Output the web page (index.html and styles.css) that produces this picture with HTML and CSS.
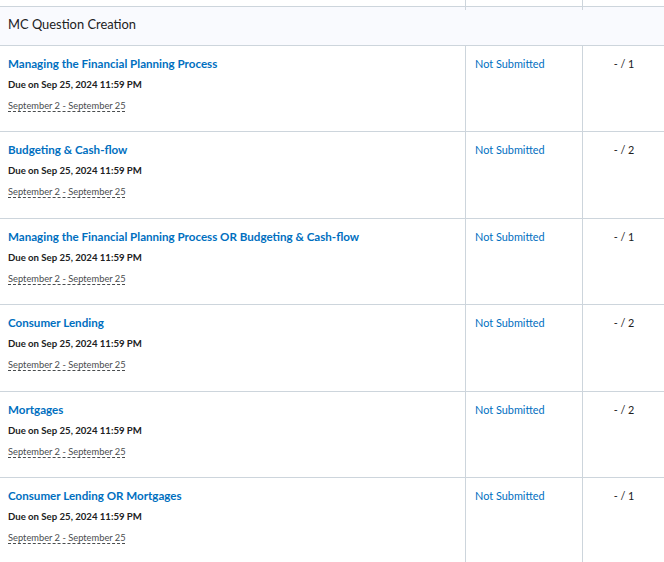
FILE: index.html
```html
<!DOCTYPE html>
<html>
<head>
<meta charset="utf-8">
<link rel="stylesheet" href="styles.css">
</head>
<body>
<div class="table">
  <div class="toprow">
    <div class="c1"></div><div class="c2"></div><div class="c3"></div>
  </div>
  <div class="group">MC Question Creation</div>

  <div class="row">
    <div class="c1">
      <a class="title">Managing the Financial Planning Process</a>
      <div class="due">Due on Sep 25, 2024 11:59 PM</div>
      <div class="dates"><span>September 2 - September 25</span></div>
    </div>
    <div class="c2"><a class="status">Not Submitted</a></div>
    <div class="c3"><span class="score">- / 1</span></div>
  </div>

  <div class="row">
    <div class="c1">
      <a class="title">Budgeting &amp; Cash-flow</a>
      <div class="due">Due on Sep 25, 2024 11:59 PM</div>
      <div class="dates"><span>September 2 - September 25</span></div>
    </div>
    <div class="c2"><a class="status">Not Submitted</a></div>
    <div class="c3"><span class="score">- / 2</span></div>
  </div>

  <div class="row">
    <div class="c1">
      <a class="title">Managing the Financial Planning Process OR Budgeting &amp; Cash-flow</a>
      <div class="due">Due on Sep 25, 2024 11:59 PM</div>
      <div class="dates"><span>September 2 - September 25</span></div>
    </div>
    <div class="c2"><a class="status">Not Submitted</a></div>
    <div class="c3"><span class="score">- / 1</span></div>
  </div>

  <div class="row">
    <div class="c1">
      <a class="title">Consumer Lending</a>
      <div class="due">Due on Sep 25, 2024 11:59 PM</div>
      <div class="dates"><span>September 2 - September 25</span></div>
    </div>
    <div class="c2"><a class="status">Not Submitted</a></div>
    <div class="c3"><span class="score">- / 2</span></div>
  </div>

  <div class="row">
    <div class="c1">
      <a class="title">Mortgages</a>
      <div class="due">Due on Sep 25, 2024 11:59 PM</div>
      <div class="dates"><span>September 2 - September 25</span></div>
    </div>
    <div class="c2"><a class="status">Not Submitted</a></div>
    <div class="c3"><span class="score">- / 2</span></div>
  </div>

  <div class="row">
    <div class="c1">
      <a class="title">Consumer Lending OR Mortgages</a>
      <div class="due">Due on Sep 25, 2024 11:59 PM</div>
      <div class="dates"><span>September 2 - September 25</span></div>
    </div>
    <div class="c2"><a class="status">Not Submitted</a></div>
    <div class="c3"><span class="score">- / 1</span></div>
  </div>
</div>
</body>
</html>
```

FILE: styles.css
```css
html, body {
  margin: 0;
  padding: 0;
  background: #ffffff;
  overflow: hidden;
}
body {
  font-family: Lato, "Noto Sans", sans-serif;
  color: #202122;
}
.table {
  width: 700px;
}
.toprow {
  display: grid;
  grid-template-columns: 466px 117px 1fr;
  height: 7px;
  box-sizing: border-box;
  border-bottom: 1px solid #cdd5dc;
}
.toprow .c1, .toprow .c2 {
  border-right: 1px solid #cdd5dc;
}
.group {
  height: 39px;
  box-sizing: border-box;
  background: #f9fafe;
  border-bottom: 1px solid #cdd5dc;
  padding: 7px 8px 0;
  font-size: 12.9px;
  line-height: 20px;
  color: #202122;
}
.row {
  display: grid;
  grid-template-columns: 466px 117px 1fr;
  height: 86.4px;
  box-sizing: border-box;
  border-bottom: 1px solid #cdd5dc;
}
.row .c1, .row .c2 {
  border-right: 1px solid #cdd5dc;
}
.c1 {
  padding: 10px 8px 0;
}
.c2 {
  padding: 10px 9px 0;
}
.c3 {
  padding: 10px 0 0;
}
.title {
  display: block;
  font-size: 11.6px;
  font-weight: 700;
  line-height: 16px;
  color: #006fbf;
}
.due {
  font-size: 9.6px;
  font-weight: 700;
  line-height: 13px;
  margin-top: 6px;
  color: #202122;
}
.dates {
  font-size: 9.3px;
  line-height: 13px;
  margin-top: 8px;
  color: #494c4e;
}
.dates span {
  text-decoration: underline dashed #494c4e;
  text-underline-offset: 2px;
}
.status {
  display: block;
  font-size: 10.9px;
  line-height: 16px;
  color: #006fbf;
}
.score {
  display: block;
  width: 82px;
  text-align: center;
  font-size: 10.8px;
  line-height: 16px;
  color: #202122;
}
```
